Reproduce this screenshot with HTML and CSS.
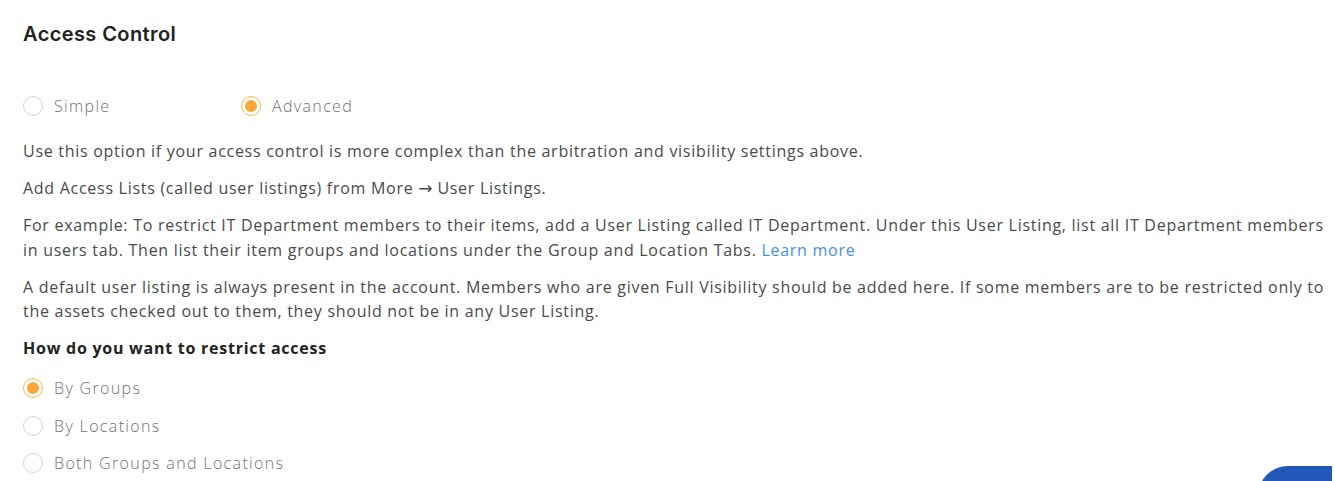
FILE: index.html
```html
<!DOCTYPE html>
<html lang="en">
<head>
    <meta charset="UTF-8">
    <meta name="viewport" content="width=device-width, initial-scale=1.0">
    <title>Access Control</title>
    <link rel="stylesheet" href="styles.css">
</head>
<body>
    <div class="container">
        <h2 class="title">Access Control</h2>

        <div class="radio-row">
            <label class="radio">
                <span class="dot"></span>
                Simple
            </label>
            <label class="radio checked">
                <span class="dot"></span>
                Advanced
            </label>
        </div>

        <p>Use this option if your access control is more complex than the arbitration and visibility settings above.</p>
        <p>Add Access Lists (called user listings) from More <span class="arrow">&rarr;</span> User Listings.</p>
        <p>For example: To restrict IT Department members to their items, add a User Listing called IT Department. Under this User Listing, list all IT Department members in users tab. Then list their item groups and locations under the Group and Location Tabs. <a href="#">Learn more</a></p>
        <p>A default user listing is always present in the account. Members who are given Full Visibility should be added here. If some members are to be restricted only to the assets checked out to them, they should not be in any User Listing.</p>

        <h4 class="question">How do you want to restrict access</h4>

        <div class="radio-list">
            <label class="radio checked">
                <span class="dot"></span>
                By Groups
            </label>
            <label class="radio">
                <span class="dot"></span>
                By Locations
            </label>
            <label class="radio">
                <span class="dot"></span>
                Both Groups and Locations
            </label>
        </div>
    </div>

    <div class="chat-button"></div>
</body>
</html>
```

FILE: styles.css
```css
body {
    font-family: 'Open Sans', sans-serif;
    background-color: #ffffff;
    color: #4a4a4a;
    margin: 0;
    overflow: hidden;
}

.container {
    padding: 20px 4px 0 23px;
}

.title {
    font-family: 'Inter', sans-serif;
    font-size: 20px;
    line-height: 28px;
    font-weight: 600;
    color: #222;
    letter-spacing: 0.4px;
    margin: 0 0 46px;
}

.radio-row {
    display: flex;
    margin-bottom: 21px;
}

.radio-row .radio {
    width: 218px;
}

.radio {
    display: flex;
    align-items: center;
    gap: 11px;
    font-size: 16px;
    line-height: 24px;
    font-weight: 300;
    color: #727272;
    letter-spacing: 1.35px;
    cursor: pointer;
}

.dot {
    width: 20px;
    height: 20px;
    border: 1px solid #d4d4d4;
    border-radius: 50%;
    box-sizing: border-box;
    flex-shrink: 0;
    position: relative;
}

.radio.checked .dot {
    border-color: #fbb54f;
}

.radio.checked .dot::after {
    content: '';
    position: absolute;
    top: 3px;
    left: 3px;
    width: 12px;
    height: 12px;
    border-radius: 50%;
    background-color: #f9a93a;
}

p {
    font-size: 16px;
    line-height: 24.5px;
    letter-spacing: 0.72px;
    margin: 0 0 12.5px;
}

.arrow {
    font-family: 'DejaVu Sans', sans-serif;
    font-size: 17px;
    line-height: 1;
    letter-spacing: 0;
}

a {
    color: #4a90e2;
    text-decoration: none;
}

.question {
    font-size: 16px;
    line-height: 24px;
    font-weight: 700;
    color: #222;
    letter-spacing: 0.75px;
    margin: 12px 0 16px;
}

.radio-list {
    display: flex;
    flex-direction: column;
    gap: 13.5px;
}

.chat-button {
    position: fixed;
    left: 1258px;
    top: 466px;
    width: 74px;
    height: 60px;
    border-radius: 30px 0 0 30px;
    background-color: #2358b8;
}
```
